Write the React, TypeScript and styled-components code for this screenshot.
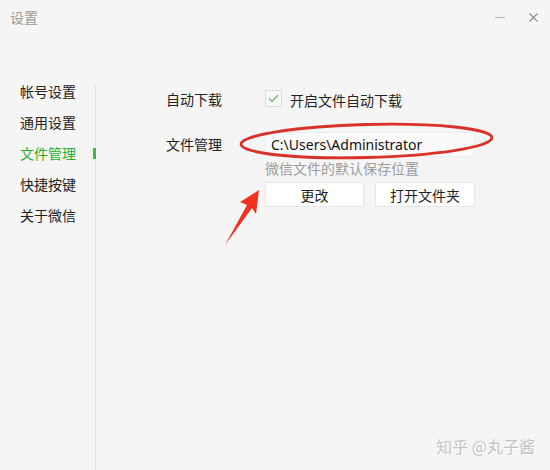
import styled, { createGlobalStyle } from "styled-components";

const GlobalStyle = createGlobalStyle`
  html, body {
    margin: 0;
    padding: 0;
    background: #f5f5f5;
  }
  body {
    font-family: "Noto Sans CJK SC", "Noto Sans", sans-serif;
    color: #222;
  }
`;

const Window = styled.div`
  position: relative;
  width: 550px;
  height: 470px;
  background: #f5f5f5;
  overflow: hidden;
`;

const TitleBar = styled.div`
  display: flex;
  align-items: center;
  justify-content: space-between;
  height: 34px;
  padding: 0 12px 0 10px;
`;

const Title = styled.div`
  font-size: 14px;
  color: #9a9a9a;
  line-height: 34px;
`;

const Controls = styled.div`
  display: flex;
  align-items: center;
  gap: 24px;
`;

const Body = styled.div`
  display: flex;
  margin-top: 42px;
  height: 394px;
`;

const Nav = styled.div`
  display: flex;
  flex-direction: column;
  width: 95px;
`;

const NavItem = styled.div<{ $active?: boolean }>`
  position: relative;
  height: 31px;
  line-height: 31px;
  padding-left: 20px;
  font-size: 14px;
  color: ${(p) => (p.$active ? "#2aae2a" : "#222")};

  ${(p) =>
    p.$active &&
    `
    &::after {
      content: "";
      position: absolute;
      right: -1px;
      top: 10px;
      width: 3px;
      height: 11px;
      background: #3cb83c;
    }
  `}
`;

const Divider = styled.div`
  width: 1px;
  margin-top: 9px;
  background: #e2e2e2;
`;

const Content = styled.div`
  display: grid;
  grid-template-columns: 99px 210px;
  grid-auto-rows: min-content;
  padding: 11px 0 0 70px;
`;

const Label = styled.div<{ $mt?: number }>`
  font-size: 14px;
  line-height: 25px;
  margin-top: ${(p) => p.$mt ?? 0}px;
`;

const CheckRow = styled.label`
  display: flex;
  align-items: center;
  gap: 8px;
  height: 25px;
  font-size: 14px;
`;

const CheckBox = styled.span`
  display: flex;
  align-items: center;
  justify-content: center;
  width: 15px;
  height: 15px;
  margin-top: -2px;
  border: 1px solid #dcdcdc;
  background: #f9f9f9;
`;

const PathInput = styled.div`
  box-sizing: border-box;
  height: 25px;
  margin-top: 20px;
  padding-left: 5px;
  line-height: 24px;
  font-family: "Noto Sans", sans-serif;
  font-size: 14px;
  color: #111;
  background: #fafafa;
  border: 1px solid #ececec;
`;

const Hint = styled.div`
  grid-column: 2;
  font-size: 14px;
  line-height: 20px;
  color: #9c9c9c;
  margin-top: 1px;
`;

const ButtonRow = styled.div`
  grid-column: 2;
  display: flex;
  gap: 11px;
  margin-top: 4px;
`;

const Btn = styled.button<{ $w: number }>`
  width: ${(p) => p.$w}px;
  height: 25px;
  padding: 0;
  font-family: "Noto Sans CJK SC", sans-serif;
  font-size: 14px;
  color: #222;
  background: #fff;
  border: 1px solid #e6e6e6;
`;

const Annotations = styled.svg`
  position: absolute;
  left: 0;
  top: 0;
  pointer-events: none;
`;

const Watermark = styled.div`
  position: absolute;
  right: 15px;
  bottom: 12px;
  font-size: 16px;
  color: #c4c4c4;
  text-shadow: 1px 1px 0 #fff;
`;

const navItems = ["帐号设置", "通用设置", "文件管理", "快捷按键", "关于微信"];

export default function App() {
  return (
    <Window>
      <GlobalStyle />
      <TitleBar>
        <Title>设置</Title>
        <Controls>
          <svg width="10" height="10" viewBox="0 0 10 10">
            <line x1="0" y1="5.5" x2="10" y2="5.5" stroke="#b0b0b0" strokeWidth="1" />
          </svg>
          <svg width="9" height="9" viewBox="0 0 9 9">
            <path d="M0.5 0.5 L8.5 8.5 M8.5 0.5 L0.5 8.5" stroke="#8a8a8a" strokeWidth="1.1" />
          </svg>
        </Controls>
      </TitleBar>
      <Body>
        <Nav>
          {navItems.map((t) => (
            <NavItem key={t} $active={t === "文件管理"}>
              {t}
            </NavItem>
          ))}
        </Nav>
        <Divider />
        <Content>
          <Label>自动下载</Label>
          <CheckRow>
            <CheckBox>
              <svg width="11" height="9" viewBox="0 0 11 9">
                <path d="M1 4.5 L4 7.5 L10 1" fill="none" stroke="#5cb85c" strokeWidth="1.2" />
              </svg>
            </CheckBox>
            开启文件自动下载
          </CheckRow>
          <Label $mt={20}>文件管理</Label>
          <PathInput>C:\Users\Administrator</PathInput>
          <Hint>微信文件的默认保存位置</Hint>
          <ButtonRow>
            <Btn $w={99}>更改</Btn>
            <Btn $w={100}>打开文件夹</Btn>
          </ButtonRow>
        </Content>
      </Body>
      <Annotations width="550" height="470" viewBox="0 0 550 470">
        <ellipse
          cx="366.5"
          cy="141"
          rx="125.5"
          ry="16.5"
          transform="rotate(-1.5 366.5 141)"
          fill="none"
          stroke="#d8322b"
          strokeWidth="2.8"
        />
        <polygon
          points="259,190 240,202 247,205 225,245 252,208 256,214"
          fill="#f2321f"
        />
      </Annotations>
      <Watermark>知乎 @丸子酱</Watermark>
    </Window>
  );
}
